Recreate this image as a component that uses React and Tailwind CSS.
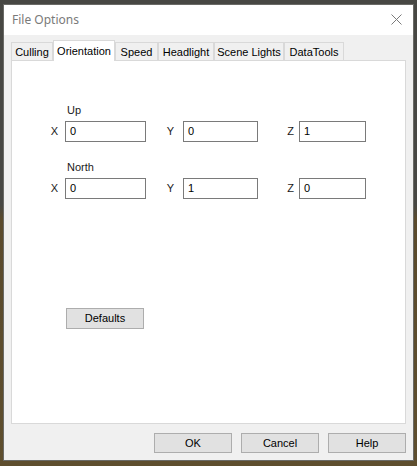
import React from "react";

const tabs = [
  { label: "Culling", w: "w-[42px]" },
  { label: "Orientation", w: "w-[62px]", active: true },
  { label: "Speed", w: "w-[43px]" },
  { label: "Headlight", w: "w-[56px]" },
  { label: "Scene Lights", w: "w-[70px]" },
  { label: "DataTools", w: "w-[60px]" },
];

function Box({ w, value }) {
  return (
    <div
      className={`${w} h-[21px] border border-[#7a7a7a] bg-white pl-[4px] text-[11px] leading-[19px] text-black`}
    >
      {value}
    </div>
  );
}

function Label({ w, pr, children }) {
  return (
    <div className={`${w} ${pr} text-right text-[11px] text-[#1a1a1a]`}>{children}</div>
  );
}

function Row({ title, values, titleMt }) {
  return (
    <div className={titleMt}>
      <div className="pl-[55px] text-[11px] leading-[13px] text-[#1a1a1a]">{title}</div>
      <div className="mt-[4px] flex items-center">
        <Label w="w-[53px]" pr="pr-[7px]">X</Label>
        <Box w="w-[81px]" value={values[0]} />
        <Label w="w-[37px]" pr="pr-[9px]">Y</Label>
        <Box w="w-[75px]" value={values[1]} />
        <Label w="w-[41px]" pr="pr-[5px]">Z</Label>
        <Box w="w-[67px]" value={values[2]} />
      </div>
    </div>
  );
}

function Btn({ children, w = "w-[78px]", h = "h-[20px]" }) {
  return (
    <div
      className={`${w} ${h} flex items-center justify-center border border-[#adadad] bg-[#e1e1e1] text-[11px] text-black`}
    >
      {children}
    </div>
  );
}

export default function App() {
  return (
    <div
      className="w-[417px] h-[466px] overflow-hidden pl-[4px] pt-[5px] bg-[linear-gradient(180deg,#474743_0%,#474743_44%,#5a4a2c_47%,#5e4e2e_100%)]"
      style={{ fontFamily: '"Liberation Sans", Arial, sans-serif' }}
    >
      <div className="w-[409px] h-[455px] flex flex-col shadow-[0_0_0_1px_#6a6a66]">
        {/* Title bar */}
        <div className="h-[30px] bg-white flex items-center justify-between pl-[8px] pr-[11px]">
          <span
            className="text-[12px] text-[#7a7a7a]"
            style={{ fontFamily: '"Noto Sans", "Open Sans", sans-serif' }}
          >
            File Options
          </span>
          <svg width="11" height="11" viewBox="0 0 11 11" className="mt-[-1px]">
            <path d="M0.5 0.5 L10.5 10.5 M10.5 0.5 L0.5 10.5" stroke="#7a7a7a" strokeWidth="1" />
          </svg>
        </div>
        {/* Body */}
        <div className="flex-1 bg-[#f0f0f0] px-[7px] pt-[5px] flex flex-col">
          {/* Tabs */}
          <div className="flex items-end h-[20px] relative z-10">
            {tabs.map((t) =>
              t.active ? (
                <div
                  key={t.label}
                  className={`${t.w} h-[21px] mb-[-1px] bg-white border border-b-0 border-[#d9d9d9] flex items-start justify-center pt-[2px] text-[11px] text-black`}
                >
                  {t.label}
                </div>
              ) : (
                <div
                  key={t.label}
                  className={`${t.w} h-[18px] bg-[#f0f0f0] border border-b-0 border-[#d9d9d9] flex items-center justify-center pt-[2px] text-[11px] text-black`}
                >
                  {t.label}
                </div>
              )
            )}
          </div>
          {/* Panel */}
          <div className="h-[364px] bg-white border border-[#d9d9d9]">
            <Row title="Up" values={["0", "0", "1"]} titleMt="mt-[43px]" />
            <Row title="North" values={["0", "1", "0"]} titleMt="mt-[19px]" />
            <div className="mt-[109px] ml-[54px]">
              <Btn h="h-[21px]">Defaults</Btn>
            </div>
          </div>
          {/* Buttons */}
          <div className="mt-[9px] flex justify-end gap-[9px]">
            <Btn>OK</Btn>
            <Btn>Cancel</Btn>
            <Btn>Help</Btn>
          </div>
        </div>
      </div>
    </div>
  );
}
